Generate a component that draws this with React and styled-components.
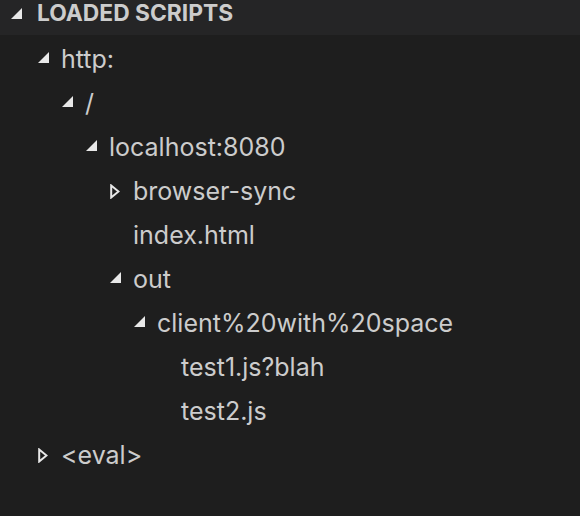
import React from "react";
import styled, { createGlobalStyle } from "styled-components";

const GlobalStyle = createGlobalStyle`
  html, body {
    margin: 0;
    padding: 0;
    background: #1e1e1e;
  }
  body {
    font-family: Inter, "Open Sans", "Liberation Sans", sans-serif;
    -webkit-font-smoothing: antialiased;
  }
`;

const tree = [
  {
    label: "http:",
    open: true,
    children: [
      {
        label: "/",
        open: true,
        children: [
          {
            label: "localhost:8080",
            open: true,
            children: [
              { label: "browser-sync", open: false, children: [] },
              { label: "index.html" },
              {
                label: "out",
                open: true,
                children: [
                  {
                    label: "client%20with%20space",
                    open: true,
                    children: [{ label: "test1.js?blah" }, { label: "test2.js" }]
                  }
                ]
              }
            ]
          }
        ]
      }
    ]
  },
  { label: "<eval>", open: false, children: [] }
];

const ExpandedIcon = () => (
  <svg width="11" height="11" viewBox="0 0 11 11">
    <polygon points="11,0 11,11 0,11" fill="#e8e8e8" />
  </svg>
);

const CollapsedIcon = () => (
  <svg width="10" height="15" viewBox="0 0 10 15">
    <polygon
      points="1.2,1.5 8.5,7.5 1.2,13.5"
      fill="none"
      stroke="#e8e8e8"
      strokeWidth="2"
      strokeLinejoin="miter"
    />
  </svg>
);

const flatten = (nodes, depth = 0, out = []) => {
  nodes.forEach(node => {
    out.push({ ...node, depth });
    if (node.children && node.open) flatten(node.children, depth + 1, out);
  });
  return out;
};

const App = () => {
  const rows = flatten(tree);
  return (
    <>
      <GlobalStyle />
      <Panel>
        <Header>
          <Twistie>
            <ExpandedIcon />
          </Twistie>
          <HeaderTitle>Loaded Scripts</HeaderTitle>
        </Header>
        <List>
          {rows.map((row, i) => (
            <Row key={i} depth={row.depth}>
              <Twistie lift={row.open ? 2 : 0}>
                {row.children ? row.open ? <ExpandedIcon /> : <CollapsedIcon /> : null}
              </Twistie>
              <Label>{row.label}</Label>
            </Row>
          ))}
        </List>
      </Panel>
    </>
  );
};

export default App;

const Panel = styled.div`
  width: 580px;
  height: 516px;
  background: #1e1e1e;
  overflow: hidden;
`;

const Header = styled.div`
  display: flex;
  align-items: center;
  height: 35px;
  box-sizing: border-box;
  padding: 0 0 8px 11px;
  background: #252526;
`;

const HeaderTitle = styled.span`
  margin-left: 3px;
  font-size: 22.8px;
  font-weight: 700;
  text-transform: uppercase;
  color: #cccccc;
  line-height: 1;
`;

const List = styled.div`
  display: flex;
  flex-direction: column;
  padding-top: 2px;
`;

const Row = styled.div`
  display: flex;
  align-items: center;
  height: 44px;
  padding-left: ${p => 38 + p.depth * 24}px;
`;

const Twistie = styled.span`
  display: flex;
  align-items: center;
  justify-content: flex-start;
  width: 23px;
  height: 100%;
  flex-shrink: 0;
  padding-bottom: ${p => (p.lift || 0) * 2}px;
  box-sizing: border-box;
`;

const Label = styled.span`
  font-size: 25px;
  color: #cccccc;
  white-space: nowrap;
  line-height: 1;
`;
